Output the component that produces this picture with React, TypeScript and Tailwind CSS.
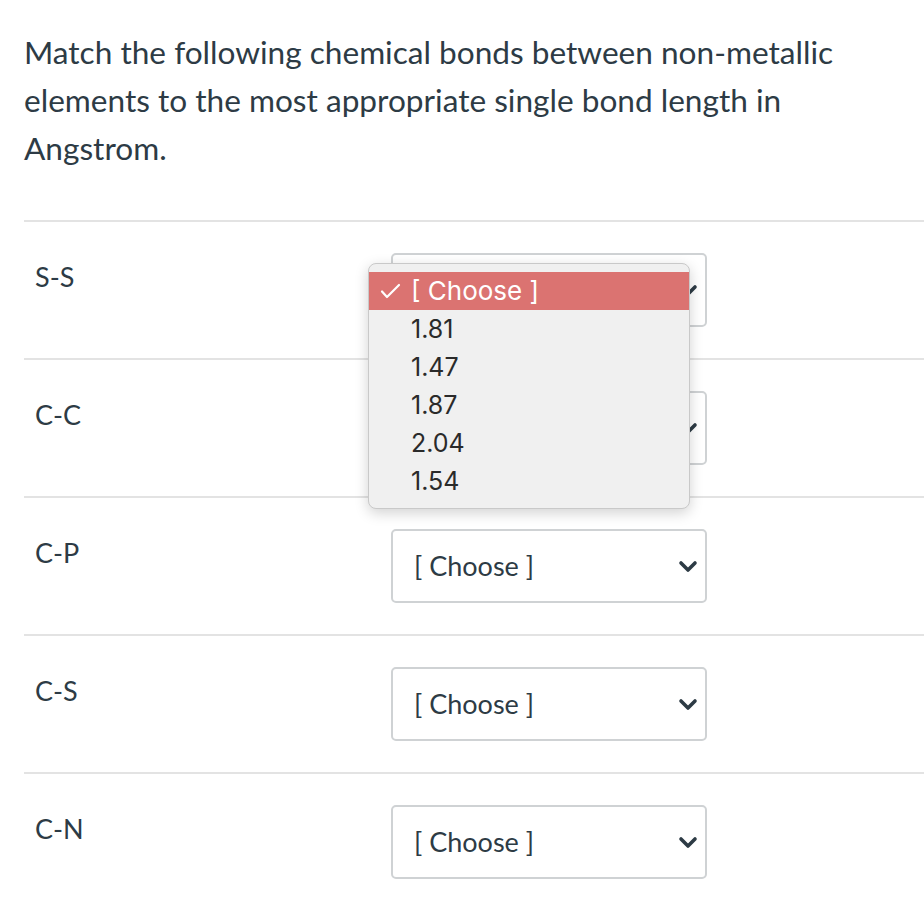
import React from 'react';

const rows = ['S-S', 'C-C', 'C-P', 'C-S', 'C-N'];
const options = ['1.81', '1.47', '1.87', '2.04', '1.54'];

const Chevron = () => (
  <svg width="20" height="13" viewBox="0 0 20 13" fill="none">
    <path d="M3 3 L10 10 L17 3" stroke="#2d3b45" strokeWidth="3.6" strokeLinecap="round" strokeLinejoin="round" />
  </svg>
);

const FakeSelect = () => (
  <div className="flex h-[74px] w-[316px] items-center justify-between rounded-[5px] border-2 border-[#cfd2d4] bg-white pl-[21px] pr-[7px]">
    <span className="text-[27px] text-[#2d3b45]">[ Choose ]</span>
    <Chevron />
  </div>
);

// native popup list drawn open over the first two selects
const OpenMenu = () => (
  <div
    className="absolute left-[344px] top-[43px] w-[322px] rounded-[8px] border border-[#c9c9c9] bg-[#f0f0f0] py-[8px] shadow-[0_4px_14px_rgba(0,0,0,0.18)]"
    style={{ fontFamily: 'Inter, "Liberation Sans", sans-serif' }}
  >
    <div className="flex h-[38px] items-center bg-[#db7371] text-white">
      <svg width="42" height="16" viewBox="0 0 42 16" fill="none" className="shrink-0">
        <path d="M13 8.5 L18 14 L30 2" stroke="white" strokeWidth="2.2" strokeLinecap="round" strokeLinejoin="round" />
      </svg>
      <span className="text-[26px] leading-none">[ Choose ]</span>
    </div>
    {options.map((o) => (
      <div key={o} className="flex h-[38px] items-center pl-[42px] text-[25px] leading-none text-[#2a2a2a]">
        {o}
      </div>
    ))}
  </div>
);

export default function App() {
  return (
    <div className="min-h-screen overflow-hidden bg-white text-[#2d3b45]" style={{ fontFamily: 'Lato, "Open Sans", sans-serif' }}>
      <p className="pl-6 pr-[60px] pt-[28px] text-[31.6px] leading-[48px]">
        Match the following chemical bonds between non-metallic elements to the most appropriate single bond length in Angstrom.
      </p>

      <div className="relative ml-6 mt-[48px]">
        {rows.map((label) => (
          <div key={label} className="flex border-t-2 border-[#e3e3e3] py-[31px]">
            <div className="w-[367px] shrink-0 pl-[11px] pt-[4px] text-[27px] leading-[40px]">{label}</div>
            <FakeSelect />
          </div>
        ))}
        <OpenMenu />
      </div>
    </div>
  );
}
